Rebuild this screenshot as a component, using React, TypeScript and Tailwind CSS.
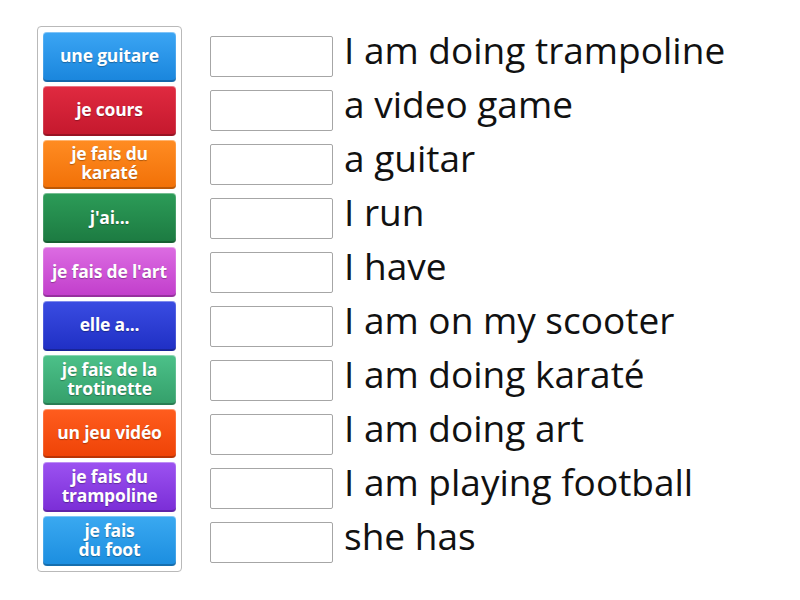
const tiles = [
  { label: "une guitare", from: "#3ba5f4", to: "#1985dc" },
  { label: "je cours", from: "#e02a40", to: "#c4182d" },
  { label: "je fais du karaté", lines: ["je fais du", "karaté"], from: "#ff8c22", to: "#f17007" },
  { label: "j'ai...", from: "#2c9c58", to: "#1c7a41" },
  { label: "je fais de l'art", from: "#dc6ce2", to: "#c13dcb" },
  { label: "elle a...", from: "#3a4ce2", to: "#1f2fc4" },
  { label: "je fais de la trotinette", lines: ["je fais de la", "trotinette"], from: "#4cc189", to: "#349f6a" },
  { label: "un jeu vidéo", from: "#ff5d1e", to: "#ee4206" },
  { label: "je fais du trampoline", lines: ["je fais du", "trampoline"], from: "#9c52f1", to: "#7a2dd6" },
  { label: "je fais du foot", lines: ["je fais", "du foot"], from: "#3aa9f1", to: "#1b8ddf" },
];

const answers = [
  "I am doing trampoline",
  "a video game",
  "a guitar",
  "I run",
  "I have",
  "I am on my scooter",
  "I am doing karaté",
  "I am doing art",
  "I am playing football",
  "she has",
];

function Tile({ t }: { t: (typeof tiles)[number] }) {
  return (
    <div
      className="flex h-[50px] w-[133px] flex-col items-center justify-center rounded-[4px] pb-[2px] text-center text-[17.5px] font-bold leading-[19px] tracking-[-0.2px] text-white shadow-[inset_0_-2px_0_rgba(0,0,0,0.22),inset_0_1px_0_rgba(255,255,255,0.35),inset_1px_0_0_rgba(255,255,255,0.15),inset_-1px_0_0_rgba(255,255,255,0.15)] [text-shadow:0_1px_1px_rgba(0,0,0,0.3)]"
      style={{ backgroundImage: `linear-gradient(to bottom, ${t.from}, ${t.to})` }}
    >
      {(t.lines ?? [t.label]).map((l) => (
        <span key={l}>{l}</span>
      ))}
    </div>
  );
}

export default function App() {
  return (
    <div className="flex h-[600px] w-[800px] gap-[28px] bg-white pl-[37px] pt-[26px] font-['Open_Sans',sans-serif]">
      <div className="flex h-[546px] w-[145px] flex-col gap-[4px] rounded-[4px] border border-[#b9b9b9] p-[5px]">
        {tiles.map((t) => (
          <Tile key={t.label} t={t} />
        ))}
      </div>

      <div className="flex flex-col gap-[4px] pt-[6px]">
        {answers.map((a) => (
          <div key={a} className="flex h-[50px] items-start gap-[11px]">
            <div className="mt-[4px] h-[41px] w-[123px] rounded-[2px] border border-[#a6a6a6] bg-white" />
            <span className="text-[37px] leading-[36px] text-[#111]">{a}</span>
          </div>
        ))}
      </div>
    </div>
  );
}
